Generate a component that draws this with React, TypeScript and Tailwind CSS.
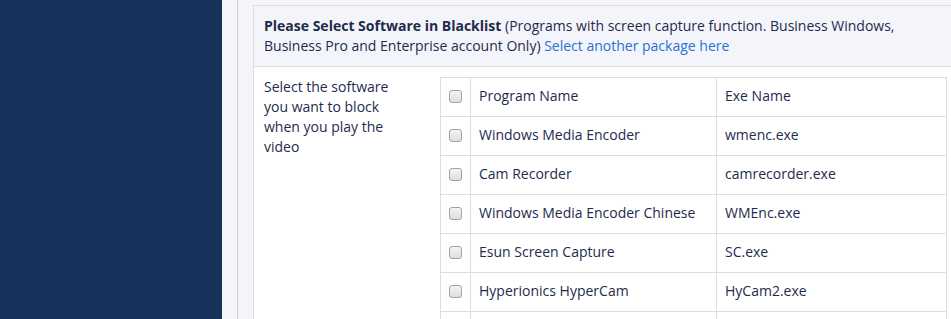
import React from "react";

const rows: [string, string][] = [
  ["Windows Media Encoder", "wmenc.exe"],
  ["Cam Recorder", "camrecorder.exe"],
  ["Windows Media Encoder Chinese", "WMEnc.exe"],
  ["Esun Screen Capture", "SC.exe"],
  ["Hyperionics HyperCam", "HyCam2.exe"],
  ["", ""],
];

function Box() {
  return (
    <span className="block mx-auto w-[13px] h-[13px] rounded-[3px] border border-[#a3a3a3] bg-gradient-to-b from-[#f4f4f4] to-[#dedede]" />
  );
}

export default function App() {
  return (
    <div
      className="flex w-[951px] h-[319px] overflow-hidden text-[14px] leading-[20px] text-[#1e2b4d]"
      style={{ fontFamily: '"Open Sans", "Noto Sans", sans-serif' }}
    >
      <div className="w-[222px] shrink-0 bg-[#17325b]" />
      <div className="w-[15px] shrink-0 bg-[#f4f5f9]" />
      <div className="w-px shrink-0 bg-[#cdced3]" />
      <div className="flex-1 bg-[#f4f5f9] pl-[15px] pt-[5px] overflow-hidden">
        <div className="w-[700px] border border-[#dcdde2] bg-white h-[400px]">
          <div className="bg-[#f4f5fa] border-b border-[#dcdde2] px-[10px] py-[10px]">
            <span className="font-bold">Please Select Software in Blacklist</span>{" "}
            (Programs with screen capture function. Business Windows, Business Pro and Enterprise account Only){" "}
            <a className="text-[#2a6fd6]">Select another package here</a>
          </div>
          <div className="flex pl-[10px] pt-[10px]">
            <div className="w-[176px] shrink-0">
              <div className="w-[140px]">Select the software you want to block when you play the video</div>
            </div>
            <table className="border-collapse w-[506px] shrink-0 table-fixed">
              <colgroup>
                <col className="w-[30px]" />
                <col className="w-[246px]" />
                <col className="w-[230px]" />
              </colgroup>
              <tbody>
                <tr>
                  <td className="border border-[#dddddd] pt-[8px] pb-[10px] align-middle"><Box /></td>
                  <td className="border border-[#dddddd] px-[8px] pt-[8px] pb-[10px]">Program Name</td>
                  <td className="border border-[#dddddd] px-[8px] pt-[8px] pb-[10px]">Exe Name</td>
                </tr>
                {rows.map(([p, e], i) => (
                  <tr key={i}>
                    <td className="border border-[#dddddd] pt-[8px] pb-[10px] align-middle"><Box /></td>
                    <td className="border border-[#dddddd] px-[8px] pt-[8px] pb-[10px]">{p || "\u00a0"}</td>
                    <td className="border border-[#dddddd] px-[8px] pt-[8px] pb-[10px]">{e || "\u00a0"}</td>
                  </tr>
                ))}
              </tbody>
            </table>
          </div>
        </div>
      </div>
    </div>
  );
}
